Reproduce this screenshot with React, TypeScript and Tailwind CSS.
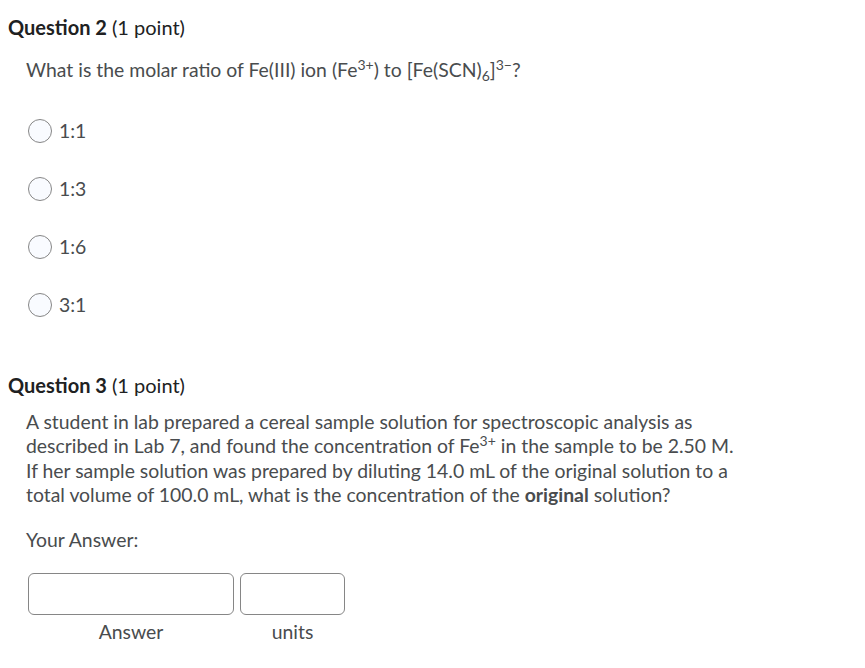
import React from "react";

const options = ["1:1", "1:3", "1:6", "3:1"];

function Radio({ label }: { label: string }) {
  return (
    <label className="flex items-center gap-[7px] h-[24px]">
      <span className="w-[24px] h-[24px] rounded-full border border-[#868686] bg-[#f9fbff]" />
      <span>{label}</span>
    </label>
  );
}

export default function App() {
  return (
    <div
      className="w-[865px] h-[668px] bg-white text-[#494c4e] text-[19.4px] leading-[24px]"
      style={{ fontFamily: "Lato, 'Open Sans', sans-serif" }}
    >
      <div className="pl-[8px] pt-[15px]">
        <h2 className="text-[20px] leading-[24px] text-[#202122]">
          <span className="font-bold">Question 2</span> (1 point)
        </h2>
        <div className="pl-[18px] mt-[19px]">
          <p>
            What is the molar ratio of Fe(III) ion (Fe<sup className="text-[14px] leading-none">3+</sup>) to [Fe(SCN)
            <sub className="text-[14px] leading-none">6</sub>]<sup className="text-[14px] leading-none">3−</sup>?
          </p>
          <div className="mt-[37px] pl-[2px] flex flex-col gap-[34px]">
            {options.map((o) => (
              <Radio key={o} label={o} />
            ))}
          </div>
        </div>
      </div>

      <div className="pl-[8px] mt-[56px]">
        <h2 className="text-[20px] leading-[24px] text-[#202122]">
          <span className="font-bold">Question 3</span> (1 point)
        </h2>
        <div className="pl-[18px] mt-[13px]">
          <p className="leading-[24.3px]">
            A student in lab prepared a cereal sample solution for spectroscopic analysis as
            <br />
            described in Lab 7, and found the concentration of Fe
            <sup className="text-[14px] leading-none">3+</sup> in the sample to be 2.50 M.
            <br />
            If her sample solution was prepared by diluting 14.0 mL of the original solution to a
            <br />
            total volume of 100.0 mL, what is the concentration of the{" "}
            <span className="font-bold">original</span> solution?
          </p>
          <p className="mt-[21px]">Your Answer:</p>
          <div className="mt-[21px] ml-[2px] flex gap-[6px]">
            <div className="flex flex-col items-center">
              <div className="w-[206px] h-[42px] rounded-[6px] border border-[#868686] bg-white" />
              <span className="mt-[5px]">Answer</span>
            </div>
            <div className="flex flex-col items-center">
              <div className="w-[105px] h-[42px] rounded-[6px] border border-[#868686] bg-white" />
              <span className="mt-[5px]">units</span>
            </div>
          </div>
        </div>
      </div>
    </div>
  );
}
